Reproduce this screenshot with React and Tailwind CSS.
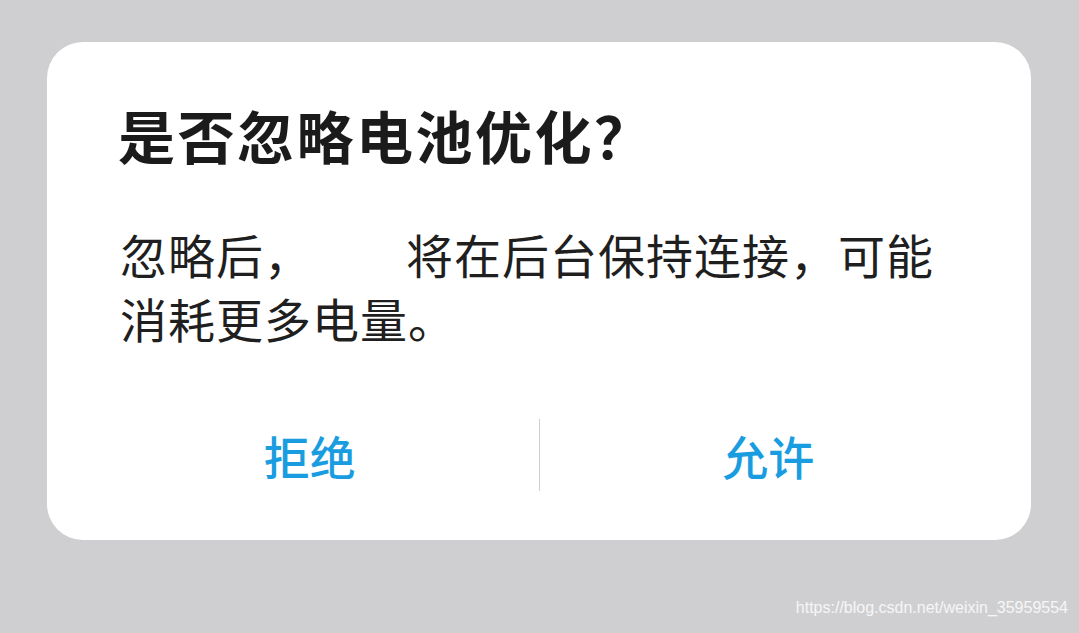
import React from "react";

const cjk = { fontFamily: '"Noto Sans CJK SC", "Noto Sans", sans-serif' };

function DialogButton({ label }) {
  return (
    <button className="flex-1 h-full flex items-center justify-center text-[46px] font-medium text-[#1a9de0] leading-none">
      {label}
    </button>
  );
}

export default function App() {
  return (
    <div className="w-[1079px] h-[633px] bg-[#cfcfd1] overflow-hidden flex flex-col" style={cjk}>
      <div className="ml-[47px] mt-[42px] w-[984px] h-[498px] bg-white rounded-[36px] flex flex-col pt-[56px]">
        <h1 className="pl-[71px] text-[57px] leading-[72px] font-bold text-[#1b1b1b] tracking-[2.5px]">
          是否忽略电池优化？
        </h1>
        <p className="pl-[73px] pr-[40px] mt-[52px] text-[47px] leading-[64px] text-[#1f1f1f] tracking-[1px]">
          忽略后，<span className="inline-block w-[94px]" />将在后台保持连接，可能
          <br />
          消耗更多电量。
        </p>
        <div className="mt-[69px] h-[72px] flex items-center px-[34px]">
          <DialogButton label="拒绝" />
          <div className="w-px h-full bg-[#cfcfcf]" />
          <DialogButton label="允许" />
        </div>
      </div>
      <div className="flex justify-end pr-[11px] mt-[58px]">
        <span
          className="text-[16px] leading-[20px] text-white/80"
          style={{ fontFamily: '"Liberation Sans", Arial, sans-serif' }}
        >
          https://blog.csdn.net/weixin_35959554
        </span>
      </div>
    </div>
  );
}
